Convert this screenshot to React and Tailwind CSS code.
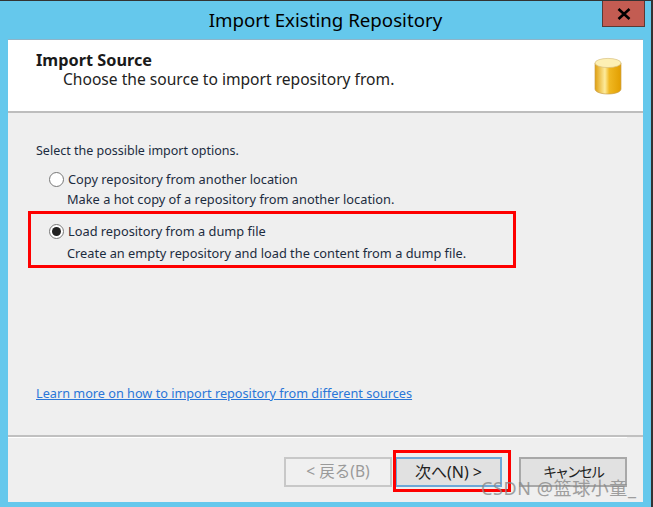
const uiFont = { fontFamily: '"Noto Sans", "Noto Sans CJK JP", sans-serif' };

function DbIcon() {
  return (
    <svg width="28" height="38" viewBox="0 0 28 38">
      <defs>
        <linearGradient id="body" x1="0" x2="1" y1="0" y2="0">
          <stop offset="0" stopColor="#e0a010" />
          <stop offset="0.38" stopColor="#fdeb9c" />
          <stop offset="0.55" stopColor="#f0b822" />
          <stop offset="1" stopColor="#e29e00" />
        </linearGradient>
      </defs>
      <path d="M1 6v26c0 3 6 5 13 5s13-2 13-5V6z" fill="url(#body)" stroke="#c8a050" strokeWidth="0.7" />
      <ellipse cx="14" cy="6" rx="13" ry="4.6" fill="#fdf0b4" stroke="#d8c080" strokeWidth="0.7" />
    </svg>
  );
}

function Radio({ checked }) {
  return (
    <span className="w-[15px] h-[15px] rounded-full border border-[#777] bg-white flex items-center justify-center shrink-0">
      {checked && <span className="w-[9px] h-[9px] rounded-full bg-[#222]" />}
    </span>
  );
}

function Option({ checked, label, desc, descClass }) {
  return (
    <div className="text-[12.8px] leading-[20px] text-[#1c2c40]">
      <div className="flex items-center gap-[4px] pl-[41px]">
        <Radio checked={checked} />
        <span>{label}</span>
      </div>
      <div className={descClass}>{desc}</div>
    </div>
  );
}

export default function App() {
  return (
    <div style={uiFont} className="relative w-[653px] h-[507px] overflow-hidden bg-[#65c8ec] border-t border-r-2 border-[#333] flex flex-col">
      <div className="h-[38px] shrink-0 relative flex items-center justify-center text-[18.7px] text-black">
        Import Existing Repository
        <div className="absolute right-[6px] top-0 w-[43px] h-[26px] bg-[#c35c52] border border-t-0 border-[#5a3a36] flex items-center justify-center">
          <svg width="14" height="12" viewBox="0 0 14 12">
            <path d="M1.5 1 12.5 11M12.5 1 1.5 11" stroke="#000" strokeWidth="2.6" />
          </svg>
        </div>
      </div>

      <div className="mx-[8px] h-[463px] flex flex-col bg-[#efefef]">
        <div className="h-[74px] shrink-0 bg-white border-b-2 border-[#bdbdbd] flex justify-between pl-[28px] pr-[21px] pt-[11px] border-t border-t-[#8fb4c8]">
          <div className="leading-[19px]">
            <div className="text-[16.3px] font-bold text-[#1a1a1a]">Import Source</div>
            <div className="text-[15.6px] pl-[27px] text-[#222]">Choose the source to import repository from.</div>
          </div>
          <div className="pt-[6px]"><DbIcon /></div>
        </div>

        <div className="flex-1 flex flex-col pt-[28px]">
          <div className="pl-[28px] text-[12.5px] leading-[20px] text-[#1c2c40]">Select the possible import options.</div>
          <div className="mt-[8px] flex flex-col gap-[12px]">
            <Option label="Copy repository from another location" desc="Make a hot copy of a repository from another location." descClass="pl-[59px]" />
            <Option checked label="Load repository from a dump file" desc="Create an empty repository and load the content from a dump file." descClass="pl-[59px] mt-[2px]" />
          </div>
          <div className="mt-auto pb-[31px] pl-[28px]">
            <a className="text-[12.7px] leading-[20px] text-[#2a76d8] underline">Learn more on how to import repository from different sources</a>
          </div>
        </div>

        <div className="h-[67px] shrink-0 border-t-2 border-[#c0c0c0] flex justify-end pr-[16px]">
          <div className="w-full flex justify-end border-t border-white pt-[19px]">
            <button className="w-[108px] h-[30px] border-2 border-[#c8c8c8] bg-[#f0f0f0] text-[15.5px] leading-none text-[#9a9a9a]">&lt; 戻る(B)</button>
            <button className="ml-[3px] w-[107px] h-[30px] border-2 border-[#6da8d8] bg-[#e1e1e1] text-[16px] leading-none text-[#222]">次へ(N) &gt;</button>
            <button className="ml-[17px] w-[108px] h-[30px] border-2 border-[#a8a8a8] bg-[#e1e1e1] text-[14px] leading-none tracking-[-2px] text-[#222]">キャンセル</button>
          </div>
        </div>
      </div>

      <div className="absolute left-[28px] top-[210px] w-[488px] h-[57px] border-[3px] border-[#fe0000]" />
      <div className="absolute left-[393px] top-[449px] w-[118px] h-[42px] border-[3px] border-[#fe0000]" />
      <div className="absolute left-[481px] top-[477px] text-[18px] leading-[20px] text-[#8a8a8a] opacity-80 tracking-[0.6px]">CSDN @篮球小童_</div>
    </div>
  );
}
